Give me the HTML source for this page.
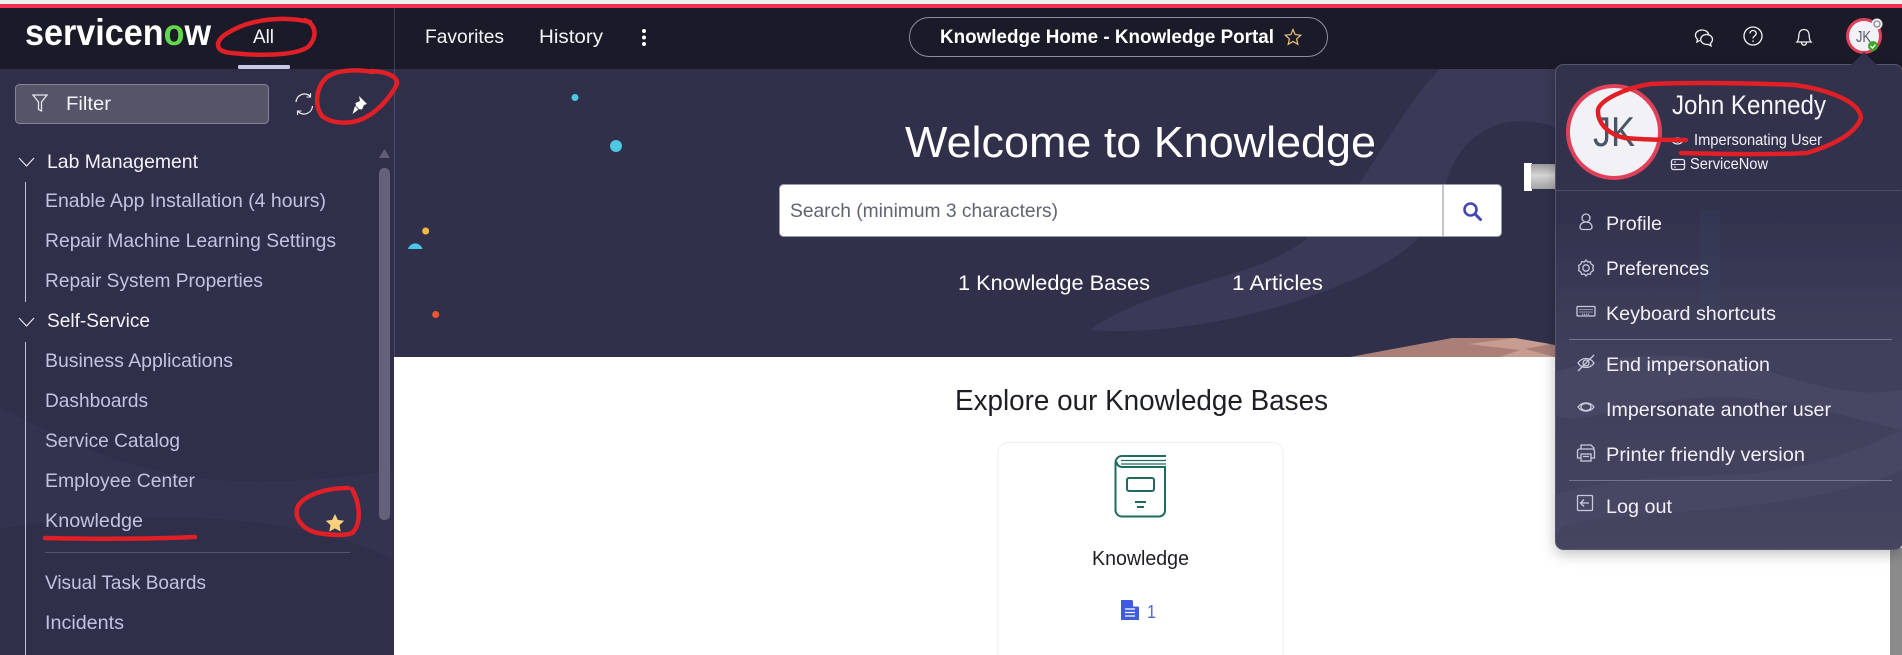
<!DOCTYPE html>
<html lang="en">
<head>
<meta charset="utf-8">
<title>Knowledge Home - Knowledge Portal</title>
<style>
html,body{margin:0;padding:0;background:#fff;width:1902px;height:655px;overflow:hidden}
svg{display:block;position:absolute;left:0;top:0}
text{font-family:"Liberation Sans",sans-serif}
.it{font-size:19.5px;fill:#c3c3e0}
.hd{font-size:19.5px;fill:#f2f2fa}
.nv{font-size:19.5px;fill:#f4f4f8}
.mn{font-size:19.5px;fill:#f0f0f8}
.ic{fill:none;stroke:#c9c9de;stroke-width:1.3}
.wi{fill:none;stroke:#f2f2f6;stroke-width:1.6}
.rd{fill:none;stroke:#e01f26;stroke-width:4.5;stroke-linecap:round;stroke-linejoin:round}
</style>
</head>
<body>
<svg width="1902" height="655" viewBox="0 0 1902 655" xmlns="http://www.w3.org/2000/svg">
<defs>
<linearGradient id="cyl" x1="0" y1="0" x2="0" y2="1"><stop offset="0" stop-color="#9a9a9a"/><stop offset=".45" stop-color="#d6d6d6"/><stop offset="1" stop-color="#a4a4a4"/></linearGradient>
<linearGradient id="pan" x1="0" y1="0" x2="0" y2="1"><stop offset="0" stop-color="#30304b"/><stop offset=".3" stop-color="#32324e"/><stop offset=".6" stop-color="#40405c"/><stop offset="1" stop-color="#44445e"/></linearGradient>
<filter id="sh" x="-10%" y="-10%" width="120%" height="120%"><feDropShadow dx="0" dy="4" stdDeviation="7" flood-color="#000" flood-opacity=".25"/></filter>
<clipPath id="panclip"><rect x="1555" y="64" width="347" height="485" rx="8"/></clipPath>
</defs>

<!-- top bar -->
<rect width="1902" height="4" fill="#f1f1f1"/>
<rect y="4" width="1902" height="4" fill="#f5314f"/>
<rect y="8" width="1902" height="61" fill="#1a1a29"/>
<rect x="394" y="8" width="1" height="61" fill="#3f3f52"/>

<text x="25" y="45" font-size="37" font-weight="700" fill="#fff" textLength="186" lengthAdjust="spacingAndGlyphs">servicen<tspan fill="#62d84e">o</tspan>w</text>
<text x="253" y="43" class="nv" textLength="21" lengthAdjust="spacingAndGlyphs">All</text>
<rect x="238" y="65" width="52" height="4" rx="1.5" fill="#c9c9ea"/>
<text x="425" y="43" class="nv" textLength="79" lengthAdjust="spacingAndGlyphs">Favorites</text>
<text x="539" y="43" class="nv" textLength="64" lengthAdjust="spacingAndGlyphs">History</text>
<circle cx="644" cy="31" r="2" fill="#fff"/><circle cx="644" cy="37.500" r="2" fill="#fff"/><circle cx="644" cy="44" r="2" fill="#fff"/>

<rect x="909.500" y="17.500" width="418" height="39" rx="19.500" fill="none" stroke="#8f8f9c"/>
<text x="940" y="43" font-size="19.500" font-weight="700" fill="#fff" textLength="334" lengthAdjust="spacingAndGlyphs">Knowledge Home - Knowledge Portal</text>
<path d="M1293 29.500l2.200 5.100 5.500.6-4.100 3.700 1.200 5.400-4.800-2.800-4.800 2.800 1.200-5.400-4.100-3.700 5.500-.6z" fill="none" stroke="#e8c47c" stroke-width="1.200"/>

<!-- right header icons -->
<g class="wi" style="stroke-width:1.300">
<path d="M1702 30c-3.800 0-6.500 2.300-6.500 5.300 0 1.700.8 3 2.100 4l-.7 2.700 3-1.600"/>
<path d="M1702 30c3.600 0 6.300 2 6.500 4.500"/>
<path d="M1706.500 34.500c3.300 0 6 2.100 6 4.900 0 1.600-.8 2.900-2.100 3.900l.6 2.600-2.800-1.500c-3.500.5-7.500-1.400-7.500-5 0-2.800 2.600-4.900 5.800-4.900z"/>
<circle cx="1753" cy="36" r="9"/>
<path d="M1750 33.500c0-4 6.200-4 6.200-.1 0 2.600-3.200 2.500-3.200 5.100"/><path d="M1753 40.500v1.500"/>
<path d="M1797 42c2-2 1.500-5 2-8 .5-3 2.500-4.500 5-4.500s4.500 1.500 5 4.500c.5 3 0 6 2 8zM1801.500 42.500c.5 3.500 4.500 3.500 5 0"/>
</g>
<circle cx="1864" cy="36" r="16.500" fill="#f2f2f6" stroke="#e0405a" stroke-width="3"/>
<text x="1856" y="42" font-size="16" fill="#555a68" textLength="15" lengthAdjust="spacingAndGlyphs">JK</text>
<circle cx="1873" cy="46" r="5" fill="#3fa62a"/><path d="M1870.500 46l2 2 3-3.500" fill="none" stroke="#fff" stroke-width="1.300"/>
<circle cx="1877" cy="24" r="5.500" fill="#f2f2f6"/><circle cx="1877" cy="24" r="3" fill="none" stroke="#8a8a96" stroke-width="1.300"/>

<!-- hero -->
<rect x="395" y="69" width="1507" height="288" fill="#30304b"/>
<path d="M1440 69C1405 105 1380 155 1360 182 1330 222 1300 252 1250 268 1190 288 1130 300 1090 330 1160 335 1240 320 1300 300 1350 283 1400 262 1425 230 1438 212 1442 198 1447 180 1465 125 1510 112 1555 127V69z" fill="#3a3a58"/>
<path d="M1350 357L1452 338 1515 338 1555 345V357z" fill="#a97f78"/>
<path d="M1468 344L1515 338 1550 344 1525 349 1555 357H1500L1520 350z" fill="#c79c91"/>

<circle cx="575" cy="97.500" r="3.500" fill="#4cc8e4"/>
<circle cx="616" cy="146" r="6" fill="#4cc8e4"/>
<circle cx="425.700" cy="231" r="3.500" fill="#f5b942"/>
<path d="M408 249a7.500 7.500 0 0 1 14.500 0z" fill="#4cc8e4"/>
<circle cx="435.700" cy="314.500" r="3.500" fill="#f0562e"/>

<text x="905" y="157" font-size="44" fill="#fff" textLength="471" lengthAdjust="spacingAndGlyphs">Welcome to Knowledge</text>
<rect x="779.500" y="184.500" width="722" height="52" rx="4" fill="#fff" stroke="#9a9aa8"/>
<rect x="1442.500" y="185" width="1" height="51" fill="#8b8b98"/>
<text x="790" y="217" font-size="19.500" fill="#5f6470" textLength="268" lengthAdjust="spacingAndGlyphs">Search (minimum 3 characters)</text>
<circle cx="1470.500" cy="209.500" r="6" fill="none" stroke="#4347b0" stroke-width="2.600"/>
<path d="M1475 214l5.500 5.500" stroke="#4347b0" stroke-width="3" stroke-linecap="round"/>
<text x="958" y="290" font-size="21" fill="#fff" textLength="192" lengthAdjust="spacingAndGlyphs">1 Knowledge Bases</text>
<text x="1232" y="290" font-size="21" fill="#fff" textLength="91" lengthAdjust="spacingAndGlyphs">1 Articles</text>
<rect x="1524" y="163" width="8" height="28" fill="#fff"/>
<rect x="1531" y="164" width="26" height="25" fill="url(#cyl)"/>

<!-- sidebar -->
<rect x="0" y="69" width="394" height="586" fill="#2f2f4a"/>
<path d="M0 407C120 470 200 500 394 470V560C300 510 130 510 0 528z" fill="#393958" opacity=".45"/>
<rect x="394" y="69" width="1" height="288" fill="#4a4a66"/>
<rect x="15.500" y="84.500" width="253" height="39" rx="4" fill="#555468" stroke="#85859a"/>
<path d="M33 95h14l-5.500 7v9l-3-1.500V102z" fill="none" stroke="#e6e6ee" stroke-width="1.300"/>
<text x="66" y="110" font-size="19.500" fill="#f2f2f8" textLength="45" lengthAdjust="spacingAndGlyphs">Filter</text>
<path d="M296 102a8.500 8.500 0 0 1 14.500-5.500M312.500 106a8.500 8.500 0 0 1-14.500 5.500" fill="none" stroke="#eee" stroke-width="1.300"/>
<path d="M310.500 93v4h-4M297.500 115v-4h4" fill="none" stroke="#eee" stroke-width="1.100"/>
<path d="M359 96l8 8-3 1-2 4.500-3-.5-3-3-.5-3 4.500-2zM355 106l3.500 3.500-6 4.500z" fill="#fff"/>
<path d="M379 158l5.500-9 5.500 9z" fill="#5f5e74"/>
<rect x="379" y="168" width="11" height="352" rx="5" fill="#63627a"/>

<path d="M19 158l7.500 8 7.500-8" fill="none" stroke="#e8e8f2" stroke-width="1.200"/>
<text x="47" y="168" class="hd" textLength="151" lengthAdjust="spacingAndGlyphs">Lab Management</text>
<path d="M19 318l7.500 8 7.500-8" fill="none" stroke="#e8e8f2" stroke-width="1.200"/>
<text x="47" y="327" class="hd" textLength="103" lengthAdjust="spacingAndGlyphs">Self-Service</text>
<rect x="25" y="182" width="1" height="120" fill="#c3c3dc"/>
<rect x="25" y="342" width="1" height="313" fill="#c3c3dc"/>

<text x="45" y="207" class="it" textLength="281" lengthAdjust="spacingAndGlyphs">Enable App Installation (4 hours)</text>
<text x="45" y="247" class="it" textLength="291" lengthAdjust="spacingAndGlyphs">Repair Machine Learning Settings</text>
<text x="45" y="287" class="it" textLength="218" lengthAdjust="spacingAndGlyphs">Repair System Properties</text>
<text x="45" y="367" class="it" textLength="188" lengthAdjust="spacingAndGlyphs">Business Applications</text>
<text x="45" y="407" class="it" textLength="103" lengthAdjust="spacingAndGlyphs">Dashboards</text>
<text x="45" y="447" class="it" textLength="135" lengthAdjust="spacingAndGlyphs">Service Catalog</text>
<text x="45" y="487" class="it" textLength="150" lengthAdjust="spacingAndGlyphs">Employee Center</text>
<text x="45" y="527" class="it" textLength="98" lengthAdjust="spacingAndGlyphs">Knowledge</text>
<path d="M335 514l2.800 5.900 6.400.8-4.700 4.400 1.200 6.400-5.700-3.100-5.700 3.100 1.200-6.400-4.700-4.400 6.400-.8z" fill="#fbd27a"/>
<rect x="45" y="552" width="305" height="1" fill="#54546e"/>
<text x="45" y="589" class="it" textLength="161" lengthAdjust="spacingAndGlyphs">Visual Task Boards</text>
<text x="45" y="629" class="it" textLength="79" lengthAdjust="spacingAndGlyphs">Incidents</text>

<!-- content -->
<text x="955" y="410" font-size="29" fill="#1d1f24" textLength="373" lengthAdjust="spacingAndGlyphs">Explore our Knowledge Bases</text>
<rect x="998" y="442.500" width="285" height="240" rx="10" fill="#fff" stroke="#eeeef0"/>
<g fill="none" stroke="#1f6b5f" stroke-width="2">
<path d="M1166 456H1122a6.500 6.500 0 0 0-6.500 6.500V510a6.500 6.500 0 0 0 6.500 6.500H1159a6 6 0 0 0 6-6V467"/>
<path d="M1166 467H1122a5.500 5.500 0 0 1-5.500-5.500"/>
<path d="M1121 460.500H1166M1121 464H1166" stroke-width="1.300"/>
<rect x="1127" y="478" width="27" height="13" rx="2"/>
<path d="M1135 502h11M1137 507h7"/>
</g>
<text x="1092" y="565" font-size="20.500" fill="#1d1f24" textLength="97" lengthAdjust="spacingAndGlyphs">Knowledge</text>
<path d="M1121 600h11l7 7v13h-18z" fill="#3f5bd9"/><path d="M1133 600l6 6.500h-6z" fill="#fff"/>
<path d="M1125 609h10M1125 612.500h10M1125 616h10" stroke="#fff" stroke-width="1.300"/>
<text x="1147" y="618" font-size="18" fill="#5068d8" textLength="9" lengthAdjust="spacingAndGlyphs">1</text>

<!-- gray scrollbar -->
<rect x="1890" y="548" width="12" height="107" fill="#8b8b8b"/>

<!-- user panel -->
<rect x="1555.500" y="64.500" width="347" height="485" rx="8" fill="url(#pan)" stroke="#55556e" filter="url(#sh)"/>
<path d="M1851 65l13-13 13 13z" fill="#30304b"/>
<g clip-path="url(#panclip)">
<path d="M1555 372C1620 350 1700 350 1770 372S1870 395 1902 390V430C1820 410 1760 390 1680 400S1580 425 1555 415z" fill="#4c4c6c" opacity=".55"/>
<path d="M1555 495C1630 470 1720 480 1780 470S1880 440 1902 430V470C1840 500 1720 510 1640 515S1560 530 1555 535z" fill="#4c4c6c" opacity=".5"/>
<path d="M1700 210h20v100h-20z" fill="#3c4a68" opacity=".2"/>
</g>
<rect x="1556" y="190" width="345" height="1" fill="#4c4c66"/>
<circle cx="1614" cy="132" r="46" fill="#f2f2f6" stroke="#e0405a" stroke-width="4"/>
<text x="1593" y="146" font-size="42" fill="#4a5568" textLength="42" lengthAdjust="spacingAndGlyphs">JK</text>
<text x="1672" y="114" font-size="27" fill="#f4f4fa" textLength="154" lengthAdjust="spacingAndGlyphs">John Kennedy</text>
<path d="M1672 141c3-4 8-4 11 0-3 4-8 4-11 0z" fill="none" stroke="#eee" stroke-width="1.300"/><circle cx="1677.500" cy="141" r="1.800" fill="#eee"/>
<text x="1694" y="145" font-size="16" fill="#f0f0f8" textLength="128" lengthAdjust="spacingAndGlyphs">Impersonating User</text>
<rect x="1671.500" y="159.500" width="13" height="10" rx="2" fill="none" stroke="#e6e6f0" stroke-width="1.300"/><path d="M1672 164.500h12M1674 162h2M1674 167h2" stroke="#e6e6f0" stroke-width="1.100"/>
<text x="1690" y="169" font-size="16" fill="#f0f0f8" textLength="78" lengthAdjust="spacingAndGlyphs">ServiceNow</text>

<text x="1606" y="230" class="mn" textLength="56" lengthAdjust="spacingAndGlyphs">Profile</text>
<text x="1606" y="275" class="mn" textLength="103" lengthAdjust="spacingAndGlyphs">Preferences</text>
<text x="1606" y="320" class="mn" textLength="170" lengthAdjust="spacingAndGlyphs">Keyboard shortcuts</text>
<text x="1606" y="371" class="mn" textLength="164" lengthAdjust="spacingAndGlyphs">End impersonation</text>
<text x="1606" y="416" class="mn" textLength="225" lengthAdjust="spacingAndGlyphs">Impersonate another user</text>
<text x="1606" y="461" class="mn" textLength="199" lengthAdjust="spacingAndGlyphs">Printer friendly version</text>
<text x="1606" y="513" class="mn" textLength="66" lengthAdjust="spacingAndGlyphs">Log out</text>
<rect x="1569" y="339" width="323" height="1" fill="#75758e"/>
<rect x="1569" y="480" width="323" height="1" fill="#75758e"/>

<g class="ic">
<circle cx="1586" cy="218" r="4"/><path d="M1586 222c-3.500 0-6 2-6 5 0 1.500 1 2.500 2.500 2.500h7c1.500 0 2.500-1 2.500-2.500 0-3-2.500-5-6-5z"/>
<path d="M1586 260l1.600 2 2.600-.3 1 2.400 2.200 1.400-.6 2.500.6 2.500-2.200 1.400-1 2.400-2.600-.3-1.600 2-1.600-2-2.600.3-1-2.400-2.200-1.400.6-2.500-.6-2.500 2.200-1.400 1-2.400 2.600.3z"/><circle cx="1586" cy="268" r="3.200"/>
<rect x="1577" y="306.500" width="18" height="9.500" rx="1"/><path d="M1579.500 309.500h13M1579.500 312h13M1582 314.200h8" stroke-dasharray="1.200 .8" stroke-width="1"/>
<path d="M1578 363c4-6 12-6 16 0-4 6-12 6-16 0z"/><circle cx="1586" cy="363" r="3"/><path d="M1578 371l16-16"/>
<path d="M1578 407c4-5.500 12-5.500 16 0-4 5.500-12 5.500-16 0z"/><ellipse cx="1586" cy="407" rx="5" ry="3.500"/>
<path d="M1581 449v-4h10l3 3v1M1581 458h-3.500v-7c0-1 1-2 2-2h13c1 0 2 1 2 2v7H1591"/><rect x="1581" y="454" width="10" height="7"/><path d="M1583 456.500h6"/>
<rect x="1577.500" y="495.500" width="15" height="15" rx="1"/><path d="M1589 503h-8M1584 499.500l-3.500 3.500 3.500 3.500"/>
</g>

<!-- hand-drawn red annotations -->
<path class="rd" d="M310 22C285 16 250 18 226 34 214 42 215 52 232 53 258 56 298 56 309 46 316 38 318 26 305 20"/>
<path class="rd" d="M373 72C355 69 335 70 326 78 316 88 314 105 322 116 332 124 348 124 360 120 376 114 390 98 397 84 398 78 390 72 372 71"/>
<path class="rd" d="M45 538C90 539 150 539 195 537"/>
<path class="rd" d="M348 488C325 488 305 495 298 506 293 518 303 530 318 533 330 535 345 536 352 533 361 525 361 505 352 489"/>
<path class="rd" d="M1681 153C1720 154 1770 155 1807 153 1830 146 1855 135 1861 118 1860 102 1830 90 1795 85 1745 83 1700 82 1650 84 1625 88 1600 100 1598 110 1597 124 1610 135 1625 138 1650 140 1670 140 1686 140"/>
</svg>
</body>
</html>
